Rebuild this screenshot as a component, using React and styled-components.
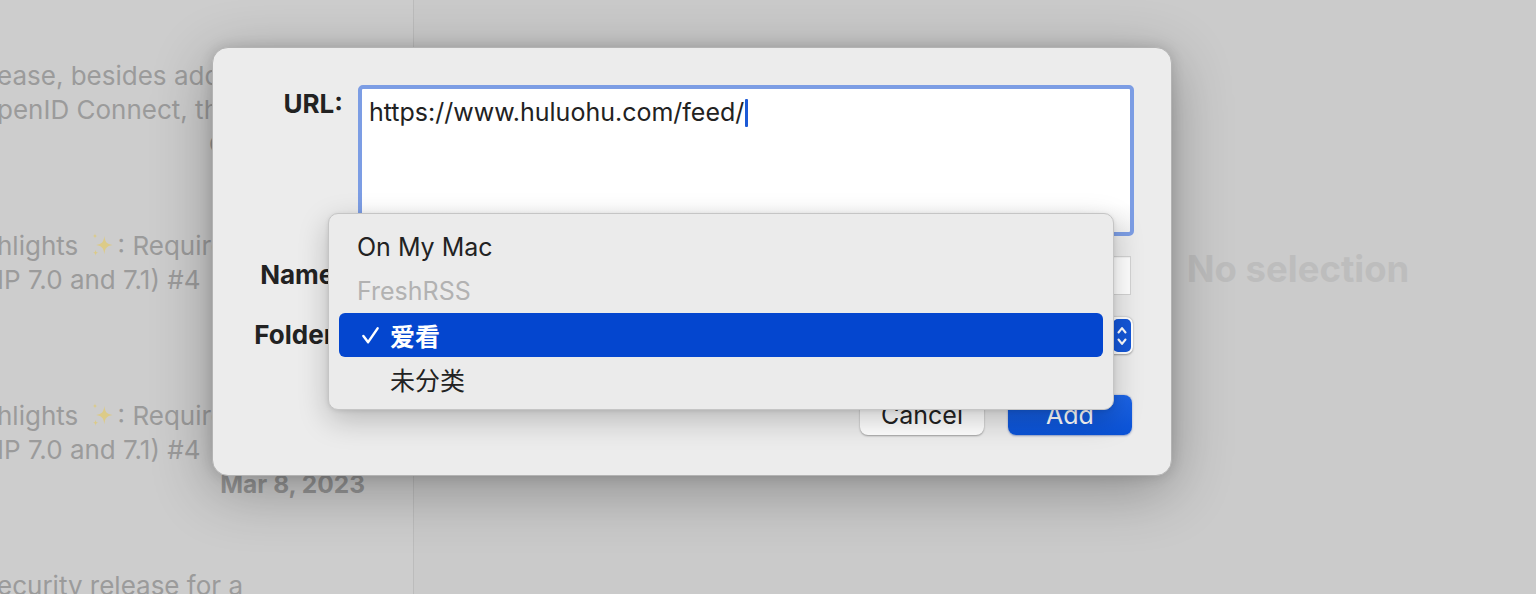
// Imports
import React from 'react';
import styled, { createGlobalStyle } from 'styled-components';

// Données
const articles = [
	{ lines: ['ease, besides adding support for', 'penID Connect, the'], date: 'Oct 20, 2023' },
	{ lines: ['hlights ✨: Requires', 'IP 7.0 and 7.1) #4'], date: 'Mar 8, 2023' },
	{ lines: ['hlights ✨: Requires', 'IP 7.0 and 7.1) #4'], date: 'Mar 8, 2023' },
	{ lines: ['ecurity release for a'], date: '' },
];

const folders = [
	{ label: 'On My Mac', kind: 'account' },
	{ label: 'FreshRSS', kind: 'disabled' },
	{ label: '爱看', kind: 'folder', checked: true },
	{ label: '未分类', kind: 'folder' },
];

// Icônes
const Sparkle = () => (
	<SparkleIcon viewBox="0 0 24 24">
		<path d="M14 4 C14.6 9.5 16 11 21 12 C16 13 14.6 14.5 14 20 C13.4 14.5 12 13 7 12 C12 11 13.4 9.5 14 4 Z" />
		<path d="M6 2 C6.2 3.6 6.6 4 8 4.3 C6.6 4.6 6.2 5 6 6.6 C5.8 5 5.4 4.6 4 4.3 C5.4 4 5.8 3.6 6 2 Z" />
		<path d="M6.5 16 C6.7 17.8 7.2 18.3 8.8 18.6 C7.2 18.9 6.7 19.4 6.5 21.2 C6.3 19.4 5.8 18.9 4.2 18.6 C5.8 18.3 6.3 17.8 6.5 16 Z" />
	</SparkleIcon>
);

const renderLine = (text) => {
	if (!text.includes('✨')) return text;
	const [before, after] = text.split('✨');
	return (<>{ before }<Sparkle/>{ after }</>);
};

// Composant
const App = () => {
	return(
		<>
			<GlobalStyle/>
			<Screen>

				{/* Liste */}
				<ArticleList>
					{
						articles.map((a, i) => (
							<Article key={ i }>
								{ a.lines.map((l, j) => <Title key={ j }>{ renderLine(l) }</Title>) }
								{ a.date && <DateLine>{ a.date }</DateLine> }
							</Article>
						))
					}
				</ArticleList>
				<Divider/>
				<MiddlePane/>
				<DetailPane>
					<Empty>No selection</Empty>
				</DetailPane>

				{/* Dialog */}
				<Dialog>
					<FormRow $height={ 151 }>
						<Label $top={ 4 }>URL:</Label>
						<UrlArea>
							https://www.huluohu.com/feed/<Caret/>
						</UrlArea>
					</FormRow>
					<FormRow $height={ 39 } $gap={ 20 }>
						<Label $top={ 4 }>Name:</Label>
						<TextField/>
					</FormRow>
					<FormRow $height={ 37 } $gap={ 22 }>
						<Label $top={ 3 }>Folder:</Label>
						<PopupButton>
							<PopupValue>爱看</PopupValue>
							<PopupArrows>
								<svg viewBox="0 0 16 30" width="14" height="28">
									<polyline points="4,11 8,6 12,11" fill="none" stroke="white" strokeWidth="2.4" strokeLinecap="round" strokeLinejoin="round"/>
									<polyline points="4,19 8,24 12,19" fill="none" stroke="white" strokeWidth="2.4" strokeLinecap="round" strokeLinejoin="round"/>
								</svg>
							</PopupArrows>
						</PopupButton>
					</FormRow>
					<Buttons>
						<Button>Cancel</Button>
						<Button $primary>Add</Button>
					</Buttons>
				</Dialog>

				{/* Menu */}
				<Menu>
					{
						folders.map((f) => (
							<MenuItem key={ f.label } $kind={ f.kind } $active={ f.checked }>
								{ f.kind === 'folder' && (
									<Check>
										{ f.checked && (
											<svg viewBox="0 0 20 20" width="19" height="19">
												<polyline points="2.5,10.5 7.5,17 17.5,2.5" fill="none" stroke="white" strokeWidth="2.6" strokeLinecap="round" strokeLinejoin="round"/>
											</svg>
										) }
									</Check>
								) }
								{ f.label }
							</MenuItem>
						))
					}
				</Menu>

			</Screen>
		</>
	);
};

// Styled
const GlobalStyle = createGlobalStyle`
	html, body{
		margin: 0;
		padding: 0;
		overflow: hidden;
	}
	body{
		font-family: Inter, "Noto Sans", "Noto Sans CJK SC", sans-serif;
		background: #cbcbcb;
	}
`;

const Screen = styled.div`
	position: relative;
	width: 1536px;
	height: 594px;
	overflow: hidden;
	display: grid;
	grid-template-columns: 413px 1px 646px 1fr;
	background: #cbcbcb;
`;

const ArticleList = styled.div`
	background: #cdcdcd;
	overflow: hidden;
	padding: 59px 0 0 0;
`;

const Article = styled.div`
	height: 170px;
`;

const Title = styled.div`
	margin: 0 0 0 -3px;
	font-size: 26px;
	line-height: 34px;
	color: #9b9b9b;
	white-space: nowrap;
`;

const SparkleIcon = styled.svg`
	display: inline-block;
	width: 28px;
	height: 28px;
	margin: 0 2px;
	vertical-align: -4px;
	fill: #dccb88;
`;

const DateLine = styled.div`
	padding: 0 48px 0 0;
	text-align: right;
	font-size: 24.5px;
	font-weight: 700;
	line-height: 34px;
	color: #959595;
	white-space: nowrap;
`;

const Divider = styled.div`
	background: #bcbcbc;
`;

const MiddlePane = styled.div`
	background: #cacaca;
`;

const DetailPane = styled.div`
	display: flex;
	justify-content: center;
	padding: 247px 0 0 0;
	background: #cbcbcb;
`;

const Empty = styled.div`
	font-size: 36.5px;
	font-weight: 700;
	line-height: 44px;
	height: 44px;
	color: #bdbdbd;
`;

const Dialog = styled.div`
	position: absolute;
	left: 212px;
	top: 47px;
	width: 960px;
	height: 429px;
	box-sizing: border-box;
	padding: 37px 37px 0 29px;
	display: flex;
	flex-direction: column;
	background: #ececec;
	border: 1px solid #b3b3b3;
	border-radius: 16px;
	box-shadow: 0 14px 60px rgba(0,0,0,0.3), 0 0 14px rgba(0,0,0,0.14);
`;

const FormRow = styled.div`
	display: grid;
	grid-template-columns: 101px 1fr;
	column-gap: 15px;
	height: ${ p => p.$height }px;
	margin: ${ p => p.$gap || 0 }px 0 0 0;
`;

const Label = styled.div`
	padding: ${ p => p.$top }px 0 0 0;
	text-align: right;
	font-size: 26px;
	font-weight: 700;
	line-height: 30px;
	color: #222;
	white-space: nowrap;
`;

const UrlArea = styled.div`
	box-sizing: border-box;
	padding: 8px 7px;
	border: 4px solid #7c9de4;
	border-radius: 5px;
	background: linear-gradient(to bottom, #fff 0%, #fff 80%, #f2f2f2 100%);
	font-size: 25px;
	line-height: 30px;
	color: #222;
	white-space: nowrap;
`;

const Caret = styled.span`
	display: inline-block;
	width: 3px;
	height: 28px;
	margin: 0 0 0 1px;
	vertical-align: -6px;
	border-radius: 1px;
	background: #1c5ad6;
`;

const TextField = styled.div`
	width: 773px;
	box-sizing: border-box;
	background: #fff;
	border: 1px solid #d3d3d3;
	box-shadow: inset 0 1px 1px rgba(0,0,0,0.05);
`;

const PopupButton = styled.div`
	width: 775px;
	box-sizing: border-box;
	display: flex;
	align-items: center;
	justify-content: space-between;
	padding: 0 2px 0 14px;
	background: #fff;
	border-radius: 7px;
	box-shadow: 0 0.5px 2px rgba(0,0,0,0.35);
	font-size: 25px;
	color: #222;
`;

const PopupValue = styled.span``;

const PopupArrows = styled.div`
	display: flex;
	align-items: center;
	justify-content: center;
	width: 18px;
	height: 33px;
	border-radius: 5px;
	background: #1457d8;
`;

const Buttons = styled.div`
	display: flex;
	justify-content: flex-end;
	gap: 24px;
	margin: 41px 2px 0 0;
`;

const Button = styled.div`
	display: flex;
	align-items: center;
	justify-content: center;
	width: 124px;
	height: 40px;
	box-sizing: border-box;
	border-radius: 8px;
	font-size: 25px;
	color: ${ p => p.$primary ? '#fff' : '#222' };
	background: ${ p => p.$primary ? 'linear-gradient(to bottom, #1c64e6, #0a52d6)' : '#fff' };
	box-shadow: ${ p => p.$primary ? '0 0.5px 2px rgba(0,40,140,0.4)' : '0 0.5px 2px rgba(0,0,0,0.35)' };
`;

const Menu = styled.div`
	position: absolute;
	left: 328px;
	top: 213px;
	width: 786px;
	height: 197px;
	box-sizing: border-box;
	padding: 11px 10px 0 10px;
	display: flex;
	flex-direction: column;
	background: #ebebeb;
	border: 1px solid #c5c5c5;
	border-radius: 10px;
	box-shadow: 0 10px 30px rgba(0,0,0,0.22), 0 1px 4px rgba(0,0,0,0.1);
`;

const MenuItem = styled.div`
	display: flex;
	align-items: center;
	height: 44px;
	padding: 0 0 0 ${ p => p.$kind === 'folder' ? 22 : 18 }px;
	border-radius: 6px;
	font-size: 25px;
	font-weight: ${ p => p.$active ? 600 : 400 };
	color: ${ p => p.$active ? '#fff' : (p.$kind === 'disabled' ? '#b2b2b2' : '#222') };
	background: ${ p => p.$active ? '#0446cf' : 'transparent' };
`;

const Check = styled.span`
	display: flex;
	align-items: center;
	width: 29px;
	height: 44px;
`;

// Export
export default App;
